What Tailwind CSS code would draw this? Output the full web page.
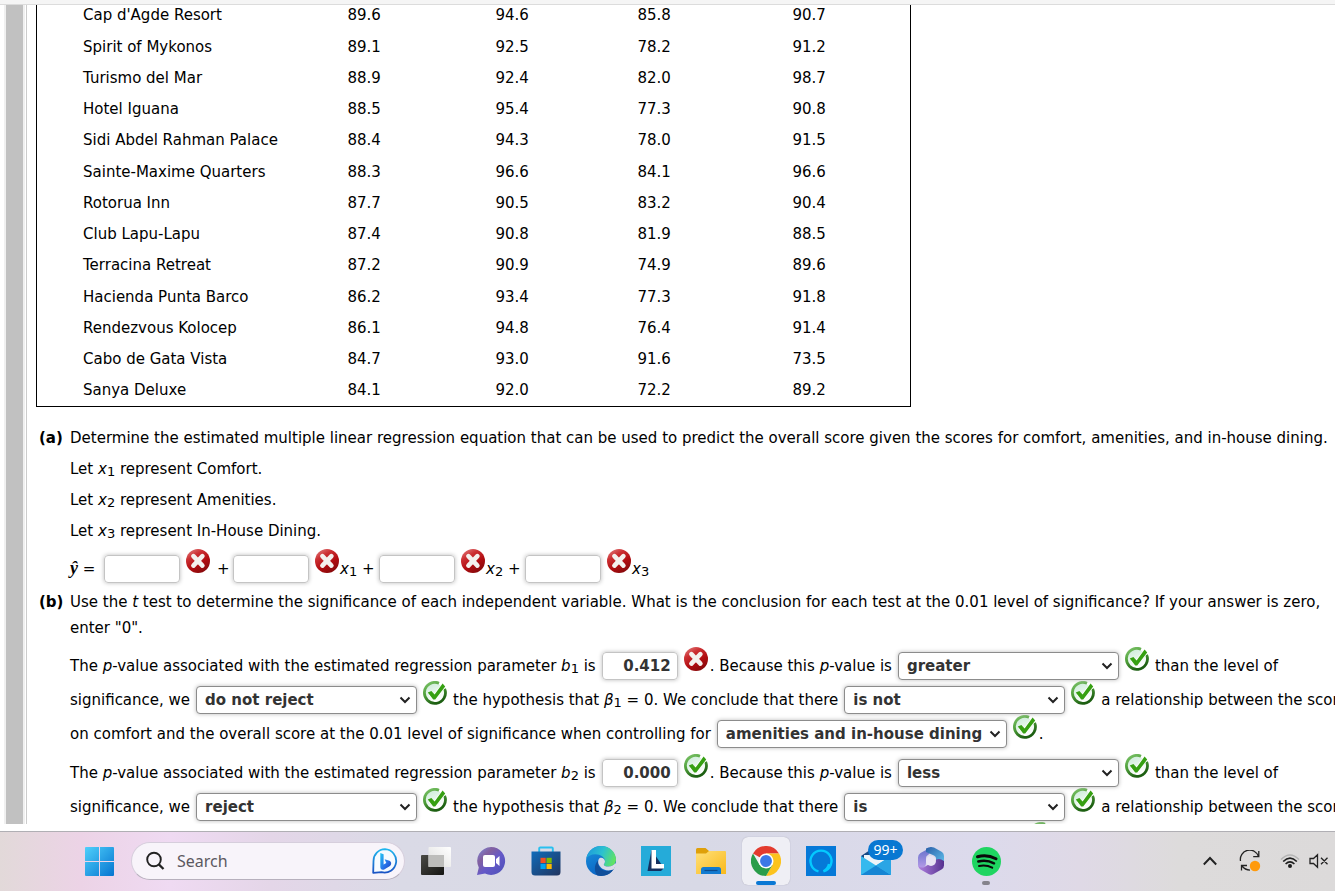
<!DOCTYPE html>
<html lang="en">
<head>
<meta charset="utf-8">
<title>Multiple regression homework</title>
<script src="https://cdn.jsdelivr.net/npm/@tailwindcss/browser@4"></script>
</head>
<body class="flex h-screen flex-col overflow-hidden bg-white font-['Verdana','DejaVu_Sans',sans-serif] text-[15px] text-black [&_sub]:-bottom-0.5 [&_sub]:text-[13px]">
<svg class="absolute h-0 w-0" aria-hidden="true">
  <defs>
    <linearGradient id="redFill" x1="0" y1="0" x2="0.6" y2="1"><stop offset="0" stop-color="#e58a8a"/><stop offset="0.35" stop-color="#cc3033"/><stop offset="0.7" stop-color="#b00c10"/><stop offset="1" stop-color="#8a0a0c"/></linearGradient>
    <linearGradient id="greenRing" x1="0" y1="0" x2="0.5" y2="1"><stop offset="0" stop-color="#7cc46a"/><stop offset="0.5" stop-color="#4f9f3a"/><stop offset="1" stop-color="#1d5f12"/></linearGradient>
    <linearGradient id="greenInner" x1="0" y1="0" x2="0.5" y2="1"><stop offset="0" stop-color="#c9ebd6"/><stop offset="1" stop-color="#ffffff"/></linearGradient>
  </defs>
  <symbol id="wrong" viewBox="0 0 24 24">
    <circle cx="12" cy="12" r="12" fill="url(#redFill)"/>
    <path d="M7.4 7.2 16.4 16.6M16.4 7.2 7.4 16.6" stroke="#f4f1ee" stroke-width="4.6" stroke-linecap="round"/>
  </symbol>
  <symbol id="right" viewBox="0 0 24 24">
    <circle cx="12" cy="12" r="9.5" fill="url(#greenInner)"/>
    <path d="M16 2.2A10.5 10.5 0 1 0 21.6 7.8" fill="none" stroke="url(#greenRing)" stroke-width="2.8"/>
    <path d="M7.5 12.6 11.4 16.6 20.8 4.2" fill="none" stroke="#fff" stroke-width="5"/>
    <path d="M4.8 11.4 8.4 10 11.6 13.6 19.6 2.6 22.2 5.6 12.2 18.6 10.2 18.4Z" fill="#36a012"/>
  </symbol>
  <symbol id="caret" viewBox="0 0 12 8"><path d="M1.5 1.5 6 6 10.5 1.5" fill="none" stroke="#222" stroke-width="2"/></symbol>
</svg>

<div class="h-[5px] shrink-0 border-b border-[#dcdcdc] bg-[#f5f5f5]"></div>
<main class="flex min-h-0 flex-1 overflow-hidden">
  <div class="ml-1 w-[21px] shrink-0 border-x-2 border-[#f0f0f0] bg-[#c1c1c1]"></div>
  <div class="ml-px w-px shrink-0 bg-[#cccccc]"></div>
  <div class="min-w-0 flex-1 overflow-hidden whitespace-nowrap pl-[9px]">
    <table class="w-[875px] border-collapse border-x border-b border-black leading-[31px] [&_td]:p-0 [&_td]:align-bottom [&_tr]:h-[31px] [&_tr:nth-child(4n+2)]:h-8">
      <colgroup><col class="w-[311px]"><col class="w-[148px]"><col class="w-[142px]"><col class="w-[155px]"><col></colgroup>
      <tbody>
        <tr class="leading-5 [&&]:h-[26px]"><td><div class="pb-1.5 pl-[46px]">Cap d'Agde Resort</div></td><td class="[&&]:pb-1.5">89.6</td><td class="[&&]:pb-1.5">94.6</td><td class="[&&]:pb-1.5">85.8</td><td class="[&&]:pb-1.5">90.7</td></tr>
        <tr><td><div class="pl-[46px]">Spirit of Mykonos</div></td><td>89.1</td><td>92.5</td><td>78.2</td><td>91.2</td></tr>
        <tr><td><div class="pl-[46px]">Turismo del Mar</div></td><td>88.9</td><td>92.4</td><td>82.0</td><td>98.7</td></tr>
        <tr><td><div class="pl-[46px]">Hotel Iguana</div></td><td>88.5</td><td>95.4</td><td>77.3</td><td>90.8</td></tr>
        <tr><td><div class="pl-[46px]">Sidi Abdel Rahman Palace</div></td><td>88.4</td><td>94.3</td><td>78.0</td><td>91.5</td></tr>
        <tr><td><div class="pl-[46px]">Sainte-Maxime Quarters</div></td><td>88.3</td><td>96.6</td><td>84.1</td><td>96.6</td></tr>
        <tr><td><div class="pl-[46px]">Rotorua Inn</div></td><td>87.7</td><td>90.5</td><td>83.2</td><td>90.4</td></tr>
        <tr><td><div class="pl-[46px]">Club Lapu-Lapu</div></td><td>87.4</td><td>90.8</td><td>81.9</td><td>88.5</td></tr>
        <tr><td><div class="pl-[46px]">Terracina Retreat</div></td><td>87.2</td><td>90.9</td><td>74.9</td><td>89.6</td></tr>
        <tr><td><div class="pl-[46px]">Hacienda Punta Barco</div></td><td>86.2</td><td>93.4</td><td>77.3</td><td>91.8</td></tr>
        <tr><td><div class="pl-[46px]">Rendezvous Kolocep</div></td><td>86.1</td><td>94.8</td><td>76.4</td><td>91.4</td></tr>
        <tr><td><div class="pl-[46px]">Cabo de Gata Vista</div></td><td>84.7</td><td>93.0</td><td>91.6</td><td>73.5</td></tr>
        <tr><td><div class="pl-[46px]">Sanya Deluxe</div></td><td>84.1</td><td>92.0</td><td>72.2</td><td>89.2</td></tr>
      </tbody>
    </table>

    <section class="mt-4 flex pl-[3px]">
      <b class="w-[31px] shrink-0 leading-[31px]">(a)</b>
      <div class="leading-[31px]">
        <p>Determine the estimated multiple linear regression equation that can be used to predict the overall score given the scores for comfort, amenities, and in-house dining.</p>
        <p class="h-[31px]">Let <i>x</i><sub>1</sub> represent Comfort.</p>
        <p class="h-[31px]">Let <i>x</i><sub>2</sub> represent Amenities.</p>
        <p class="h-[31px]">Let <i>x</i><sub>3</sub> represent In-House Dining.</p>
        <div class="flex h-[42px] items-center pt-0.5">
          <span class="w-[34px]"><b class="font-['Liberation_Serif',serif] text-lg italic leading-none">ŷ</b> =</span>
          <input aria-label="Intercept" class="h-7 w-[76px] rounded border border-[#c4c4c4] px-2 shadow-[0_0_4px_#bbb]">
          <svg class="ml-[6px] h-6 w-6 self-start"><use href="#wrong"/></svg>
          <span class="w-[23px] pl-[7px]">+</span>
          <input aria-label="Coefficient of x1" class="h-7 w-[76px] rounded border border-[#c4c4c4] px-2 shadow-[0_0_4px_#bbb]">
          <svg class="ml-[6px] h-6 w-6 self-start"><use href="#wrong"/></svg>
          <span class="w-[40px] pl-px"><i>x</i><sub>1</sub> +</span>
          <input aria-label="Coefficient of x2" class="h-7 w-[76px] rounded border border-[#c4c4c4] px-2 shadow-[0_0_4px_#bbb]">
          <svg class="ml-[6px] h-6 w-6 self-start"><use href="#wrong"/></svg>
          <span class="w-[40px] pl-px"><i>x</i><sub>2</sub> +</span>
          <input aria-label="Coefficient of x3" class="h-7 w-[76px] rounded border border-[#c4c4c4] px-2 shadow-[0_0_4px_#bbb]">
          <svg class="ml-[6px] h-6 w-6 self-start"><use href="#wrong"/></svg>
          <span class="pl-px"><i>x</i><sub>3</sub></span>
        </div>
      </div>
    </section>

    <section class="flex pl-[3px]">
      <b class="w-[31px] shrink-0 leading-[26px]">(b)</b>
      <div class="leading-[26px]">
        <p>Use the <i>t</i> test to determine the significance of each independent variable. What is the conclusion for each test at the 0.01 level of significance? If your answer is zero,<br>enter "0".</p>

        <div class="mt-2 flex h-[34px] items-center">
          <span>The <i>p</i>-value associated with the estimated regression parameter <i>b</i><sub>1</sub> is</span>
          <input aria-label="p-value for b1" value="0.412" class="ml-1.5 h-7 w-[76px] rounded border border-[#c4c4c4] pr-1.5 text-right font-bold text-[#333] shadow-[0_0_4px_#bbb]">
          <svg class="-mt-0.5 ml-[6px] h-6 w-6 self-start"><use href="#wrong"/></svg>
          <span class="ml-0.5">. Because this <i>p</i>-value is</span>
          <span class="relative ml-1.5 flex"><select aria-label="Comparison for b1" class="h-7 w-[221px] appearance-none rounded border border-[#8c8c8c] bg-white pl-2 font-bold text-[#333] shadow-[0_0_4px_#bbb]"><option>greater</option><option>less</option></select><svg class="pointer-events-none absolute right-1.5 top-2.5 h-2 w-3"><use href="#caret"/></svg></span>
          <svg class="-mt-0.5 ml-[6px] h-6 w-6 self-start"><use href="#right"/></svg>
          <span class="ml-1.5">than the level of</span>
        </div>
        <div class="flex h-[34px] items-center">
          <span>significance, we</span>
          <span class="relative ml-1.5 flex"><select aria-label="Decision for b1" class="h-7 w-[221px] appearance-none rounded border border-[#8c8c8c] bg-white pl-2 font-bold text-[#333] shadow-[0_0_4px_#bbb]"><option>do not reject</option><option>reject</option></select><svg class="pointer-events-none absolute right-1.5 top-2.5 h-2 w-3"><use href="#caret"/></svg></span>
          <svg class="-mt-0.5 ml-[6px] h-6 w-6 self-start"><use href="#right"/></svg>
          <span class="ml-1.5">the hypothesis that <i>β</i><sub>1</sub> = 0. We conclude that there</span>
          <span class="relative ml-1.5 flex"><select aria-label="Conclusion for b1" class="h-7 w-[221px] appearance-none rounded border border-[#8c8c8c] bg-white pl-2 font-bold text-[#333] shadow-[0_0_4px_#bbb]"><option>is not</option><option>is</option></select><svg class="pointer-events-none absolute right-1.5 top-2.5 h-2 w-3"><use href="#caret"/></svg></span>
          <svg class="-mt-0.5 ml-[6px] h-6 w-6 self-start"><use href="#right"/></svg>
          <span class="ml-1.5">a relationship between the scores</span>
        </div>
        <div class="flex h-[34px] items-center">
          <span>on comfort and the overall score at the 0.01 level of significance when controlling for</span>
          <span class="relative ml-1.5 flex"><select aria-label="Controlled variables for b1" class="h-7 w-[290px] appearance-none rounded border border-[#8c8c8c] bg-white pl-2 font-bold text-[#333] shadow-[0_0_4px_#bbb]"><option>amenities and in-house dining</option></select><svg class="pointer-events-none absolute right-1.5 top-2.5 h-2 w-3"><use href="#caret"/></svg></span>
          <svg class="-mt-0.5 ml-[6px] h-6 w-6 self-start"><use href="#right"/></svg>
          <span class="ml-0.5">.</span>
        </div>

        <div class="mt-[5px] flex h-[34px] items-center">
          <span>The <i>p</i>-value associated with the estimated regression parameter <i>b</i><sub>2</sub> is</span>
          <input aria-label="p-value for b2" value="0.000" class="ml-1.5 h-7 w-[76px] rounded border border-[#c4c4c4] pr-1.5 text-right font-bold text-[#333] shadow-[0_0_4px_#bbb]">
          <svg class="-mt-0.5 ml-[6px] h-6 w-6 self-start"><use href="#right"/></svg>
          <span class="ml-0.5">. Because this <i>p</i>-value is</span>
          <span class="relative ml-1.5 flex"><select aria-label="Comparison for b2" class="h-7 w-[221px] appearance-none rounded border border-[#8c8c8c] bg-white pl-2 font-bold text-[#333] shadow-[0_0_4px_#bbb]"><option>less</option><option>greater</option></select><svg class="pointer-events-none absolute right-1.5 top-2.5 h-2 w-3"><use href="#caret"/></svg></span>
          <svg class="-mt-0.5 ml-[6px] h-6 w-6 self-start"><use href="#right"/></svg>
          <span class="ml-1.5">than the level of</span>
        </div>
        <div class="flex h-[34px] items-center">
          <span>significance, we</span>
          <span class="relative ml-1.5 flex"><select aria-label="Decision for b2" class="h-7 w-[221px] appearance-none rounded border border-[#8c8c8c] bg-white pl-2 font-bold text-[#333] shadow-[0_0_4px_#bbb]"><option>reject</option><option>do not reject</option></select><svg class="pointer-events-none absolute right-1.5 top-2.5 h-2 w-3"><use href="#caret"/></svg></span>
          <svg class="-mt-0.5 ml-[6px] h-6 w-6 self-start"><use href="#right"/></svg>
          <span class="ml-1.5">the hypothesis that <i>β</i><sub>2</sub> = 0. We conclude that there</span>
          <span class="relative ml-1.5 flex"><select aria-label="Conclusion for b2" class="h-7 w-[221px] appearance-none rounded border border-[#8c8c8c] bg-white pl-2 font-bold text-[#333] shadow-[0_0_4px_#bbb]"><option>is</option><option>is not</option></select><svg class="pointer-events-none absolute right-1.5 top-2.5 h-2 w-3"><use href="#caret"/></svg></span>
          <svg class="-mt-0.5 ml-[6px] h-6 w-6 self-start"><use href="#right"/></svg>
          <span class="ml-1.5">a relationship between the scores</span>
        </div>
        <div class="flex h-[34px] pl-[959px]">
          <svg class="-mt-0.5 h-6 w-6 self-start"><use href="#right"/></svg>
        </div>
      </div>
    </section>
  </div>
</main>
<div class="h-[7px] shrink-0"></div>

<footer class="flex h-[60px] shrink-0 items-center border-t border-[#b0afb4] bg-[linear-gradient(90deg,#e2d9d9_0,#ecd3e6_80px,#efdaf2_170px,#e4d6e8_270px,#dadae6_400px,#d8d9e6_700px,#dcdaec_980px,#dfd9e6_1080px,#dddbdb_1180px,#dcdada_1335px)] pb-px pl-[75px] font-['Segoe_UI','Noto_Sans',sans-serif]">
  <button aria-label="Start" class="flex h-12 w-12 items-center justify-center">
    <svg class="h-[29px] w-[29px]" viewBox="0 0 29 29"><defs><linearGradient id="win" x1="0" y1="0" x2="1" y2="1" gradientUnits="objectBoundingBox"><stop offset="0" stop-color="#4fd0fb"/><stop offset="1" stop-color="#0574d0"/></linearGradient></defs><path fill="url(#win)" d="M1 0H14V14H0V1a1 1 0 0 1 1-1ZM15 0H28a1 1 0 0 1 1 1V14H15ZM0 15H14V29H1a1 1 0 0 1-1-1ZM15 15H29V28a1 1 0 0 1-1 1H15Z"/></svg>
  </button>
  <label class="ml-2 flex h-[38px] w-[274px] items-center rounded-full border border-[#d6cedc] border-b-[#b7b0bd] bg-[#f8f4fa] pl-[13px] pr-1.5">
    <svg class="h-5 w-5" viewBox="0 0 20 20"><circle cx="9" cy="8.500" r="6.800" fill="none" stroke="#222" stroke-width="1.900"/><path d="M13.800 13.400 18.500 18" stroke="#222" stroke-width="2.300"/></svg>
    <input aria-label="Search" placeholder="Search" class="ml-3 min-w-0 flex-1 bg-transparent text-base outline-none placeholder:text-[#5c5860]">
    <svg class="h-[26px] w-[26px]" viewBox="0 0 26 26"><defs><linearGradient id="bing" x1="0" y1="0" x2="0" y2="1"><stop offset="0" stop-color="#1fb6ee"/><stop offset="1" stop-color="#1a53c4"/></linearGradient><linearGradient id="bing2" x1="0" y1="0" x2="1" y2="1"><stop offset="0" stop-color="#25c5f2"/><stop offset="0.600" stop-color="#2870e8"/><stop offset="1" stop-color="#2047b8"/></linearGradient></defs><path d="M13 1.200A11.700 11.700 0 1 1 9.500 24.200L1.200 24.800 1.500 13A11.700 11.700 0 0 1 13 1.200Z" fill="#f6fbff" stroke="url(#bing)" stroke-width="1.800" stroke-linejoin="round"/><path d="M8.300 5 11.600 6.300V16.500L14.300 15 12.600 11.200 17.500 12.800C19.800 13.900 19.700 16.900 17.600 18.300L12.200 21.400C10 22.300 8.300 21 8.300 19Z" fill="url(#bing2)"/></svg>
  </label>
  <nav class="ml-[7px] flex gap-[7px]">
    <button aria-label="Task view" class="flex h-12 w-12 items-center justify-center">
      <svg class="h-[30px] w-[30px]" viewBox="0 0 30 30"><defs><linearGradient id="tvd" x1="0" y1="0" x2="1" y2="1"><stop offset="0" stop-color="#4a4a46"/><stop offset="1" stop-color="#151512"/></linearGradient><linearGradient id="tvl" x1="1" y1="0" x2="0" y2="1"><stop offset="0" stop-color="#fff"/><stop offset="1" stop-color="#dededd"/></linearGradient></defs><rect y="9" width="23" height="20" rx="1" fill="url(#tvd)"/><rect x="7.500" y="1" width="22.500" height="20" rx="1" fill="url(#tvl)"/><path d="M7.500 9H23V21H7.500Z" fill="#bdbdbb"/></svg>
    </button>
    <button aria-label="Chat" class="flex h-12 w-12 items-center justify-center">
      <svg class="h-[30px] w-[30px]" viewBox="0 0 30 30"><defs><linearGradient id="chat" x1="0" y1="0" x2="1" y2="1"><stop offset="0" stop-color="#7a8be0"/><stop offset="0.300" stop-color="#83609f"/><stop offset="0.550" stop-color="#6559c8"/><stop offset="1" stop-color="#4c50b8"/></linearGradient></defs><path d="M15 1A14 14 0 1 1 9 27.600L1 29 2.800 21.500A14 14 0 0 1 15 1Z" fill="url(#chat)"/><rect x="7" y="9" width="12" height="12" rx="2" fill="#fff"/><path d="M20 13 23.500 10V20L20 17Z" fill="#fff"/></svg>
    </button>
    <button aria-label="Microsoft Store" class="flex h-12 w-12 items-center justify-center">
      <svg class="h-[30px] w-[30px]" viewBox="0 0 30 30"><defs><linearGradient id="store" x1="0" y1="0" x2="1" y2="1"><stop offset="0" stop-color="#0f6cba"/><stop offset="1" stop-color="#22355f"/></linearGradient></defs><path d="M8.200 7V2.500a1 1 0 0 1 1-1H20.800a1 1 0 0 1 1 1V7" fill="none" stroke="#29c0ef" stroke-width="1.900"/><path d="M.500 5.500H29.500V26a3.500 3.500 0 0 1-3.500 3.500H4A3.500 3.500 0 0 1 .500 26Z" fill="url(#store)"/><path fill="#f25022" d="M9.500 11.800h5.200V17H9.500z"/><path fill="#7fba00" d="M15.500 11.800h5.200V17h-5.200z"/><path fill="#00a4ef" d="M9.500 17.800h5.200V23H9.500z"/><path fill="#ffb900" d="M15.500 17.800h5.200V23h-5.200z"/></svg>
    </button>
    <button aria-label="Edge" class="flex h-12 w-12 items-center justify-center">
      <svg class="h-[30px] w-[30px]" viewBox="0 0 30 30"><defs><linearGradient id="edgeTop" x1="0" y1="0.300" x2="1" y2="0.600"><stop offset="0" stop-color="#1d9bdb"/><stop offset="0.500" stop-color="#2cc1d0"/><stop offset="1" stop-color="#63e45f"/></linearGradient><linearGradient id="edgeMid" x1="0" y1="0" x2="0.500" y2="1"><stop offset="0" stop-color="#1993db"/><stop offset="1" stop-color="#0a62c4"/></linearGradient></defs><circle cx="15" cy="15" r="15" fill="url(#edgeMid)"/><path d="M.300 12.500C1.800 5 7.800 0 15 0 23.500 0 30 6 30 13.500 30 18 26.500 20.500 22.500 20.500 19.500 20.500 17.800 19.700 17.800 18.700 17.800 18 19 17.300 19 15.200 19 11.500 14.500 8.200 9.500 8.200 5 8.200 2 10 .300 12.500Z" fill="url(#edgeTop)"/><path d="M11.500 29.600C8 26 7.800 18.500 12.200 14.500 11 20 15.500 25 20.500 25 23.500 25 26 24.200 27.800 23 24.500 28.500 18 31 11.500 29.600Z" fill="#104f9b"/><path d="M19 15.200C19 17.300 17.800 18 17.800 18.700 17.800 19.700 19.500 20.500 22.500 20.500 25.500 20.500 28 19.200 29.100 17.300L31 18 27.800 23C25 24.800 21 25 17.500 23.200 13.800 21.300 11 17 12.700 13.300 14.500 10.500 18.500 12 19 15.200Z" fill="#dbdbe8"/></svg>
    </button>
    <button aria-label="L app" class="flex h-12 w-12 items-center justify-center">
      <svg class="h-[30px] w-[30px]" viewBox="0 0 30 30"><path fill="#25abd9" d="M0 0h30v30H0z"/><path d="M10.500 4 6.500 25H20L23 22Z" fill="#14305f"/><path d="M10.500 4H15V18H23V22.500H10.500Z" fill="#fff"/></svg>
    </button>
    <button aria-label="File Explorer" class="flex h-12 w-12 items-center justify-center">
      <svg class="h-[30px] w-[30px]" viewBox="0 0 30 30"><defs><linearGradient id="folder" x1="0" y1="0" x2="1" y2="1"><stop offset="0" stop-color="#ffe07a"/><stop offset="1" stop-color="#f9b91a"/></linearGradient></defs><path d="M0 3.500A1.500 1.500 0 0 1 1.500 2H9.500L13 5V9H0Z" fill="#dfa00a"/><path d="M0 7.500H10L13 5H29a1 1 0 0 1 1 1V28H0Z" fill="url(#folder)"/><path d="M5 28V23.500A2.500 2.500 0 0 1 7.500 21H22.500A2.500 2.500 0 0 1 25 23.500V28Z" fill="#127bd0"/><path d="M8.500 24.500h13" stroke="#0b4b8c" stroke-width="1.200"/></svg>
    </button>
    <button aria-label="Chrome" class="relative flex h-12 w-12 items-center justify-center rounded-md bg-[#efeff5] shadow-[0_0_1px_#9999a8]">
      <svg class="h-[30px] w-[30px]" viewBox="0 0 48 48"><path d="M24 24 3.200 12A24 24 0 0 1 44.800 12H24Z" fill="#e33b2e"/><path d="M24 12H44.800A24 24 0 0 1 24 48L34.400 30Z" fill="#fcc31e"/><path d="M3.200 12A24 24 0 0 0 24 48L34.400 30 24 34 13.600 30Z" fill="#2a9d4a"/><circle cx="24" cy="24" r="12" fill="#fff"/><circle cx="24" cy="24" r="9.500" fill="#3b78e7"/></svg>
      <span class="absolute bottom-0 left-3.5 h-1 w-5 rounded-full bg-[#0a78d4]"></span>
    </button>
    <button aria-label="Alexa" class="flex h-12 w-12 items-center justify-center">
      <svg class="h-[30px] w-[30px]" viewBox="0 0 30 30"><path fill="#0579d8" d="M0 0h30v30H0z"/><path d="M12.500 25.300A10.500 10.500 0 1 1 17.500 25.300Q22 22.500 23 18" fill="none" stroke="#04caff" stroke-width="2.400"/></svg>
    </button>
    <button aria-label="Mail, 99+ unread" class="relative flex h-12 w-12 items-center justify-center">
      <svg class="h-[30px] w-[30px]" viewBox="0 0 30 30"><path d="M0 10 15 0 30 10V16H0Z" fill="#174a86"/><path d="M3 9H27V20H3Z" fill="#eef3f8"/><path d="M0 10 15 19.500 30 10V29H0Z" fill="#35b9ee"/><path d="M0 29 15 19.500 30 29Z" fill="#1685d3"/><path d="M30 10V29L15 19.500Z" fill="#2aa5e5"/></svg>
      <span class="absolute left-4 top-[3px] flex h-5 w-[35px] items-center justify-center rounded-full bg-[#0878d2] text-sm text-white">99+</span>
    </button>
    <button aria-label="Microsoft 365" class="flex h-12 w-12 items-center justify-center">
      <svg class="h-[30px] w-[30px]" viewBox="0 0 30 30"><defs><linearGradient id="mA" x1="0" y1="0" x2="0" y2="1"><stop offset="0" stop-color="#5f6fc8"/><stop offset="1" stop-color="#b59ae8"/></linearGradient><linearGradient id="mB" x1="0" y1="0" x2="1" y2="1"><stop offset="0" stop-color="#2b5fa8"/><stop offset="1" stop-color="#62c4f0"/></linearGradient><linearGradient id="mC" x1="0" y1="0" x2="1" y2="0"><stop offset="0" stop-color="#ae80df"/><stop offset="1" stop-color="#56318f"/></linearGradient></defs><path d="M15.500 1 4.500 7Q2 8.500 2 11.500V19Q2 22 5 22 10 22 10 17V12Q10 10 12 9Q15 7 15.500 1Z" fill="url(#mA)"/><path d="M10 2.500Q14 0 18 1.500L26 6Q28 7.500 28 10V19L20 15V12Q20 10.500 18 9.500L10 6Z" fill="url(#mB)"/><path d="M28 15V19.500Q28 22 25.500 23.500L17.500 28Q15 29.300 12.500 28L4.500 23.500Q2.500 22 2.500 20 6 23 10 20L18 15.500Q22 11 28 15Z" fill="url(#mC)"/><circle cx="15" cy="15" r="5" fill="#e8e3f4"/></svg>
    </button>
    <button aria-label="Spotify" class="relative flex h-12 w-12 items-center justify-center">
      <svg class="h-[29px] w-[29px]" viewBox="0 0 29 29"><circle cx="14.500" cy="14.500" r="14.500" fill="#1fd561"/><g fill="none" stroke="#0a0a0a" stroke-linecap="round"><path d="M5.500 9.800Q15 7 24 11.800" stroke-width="3"/><path d="M6.300 14.500Q14.500 12.200 22 16.300" stroke-width="2.500"/><path d="M7 19Q14 17.300 20.200 20.700" stroke-width="2"/></g></svg>
      <span class="absolute bottom-0 left-5 h-1 w-2 rounded-full bg-[#85838c]"></span>
    </button>
  </nav>
  <div class="ml-auto flex items-center pr-[6px]">
    <button aria-label="Show hidden icons"><svg class="h-4 w-4" viewBox="0 0 16 16"><path d="M1.800 11.500 8 5 14.200 11.500" fill="none" stroke="#222" stroke-width="1.900"/></svg></button>
    <button aria-label="Updates" class="ml-[21px]"><svg class="h-[22px] w-[22px]" viewBox="0 0 22 22"><g fill="none" stroke="#222" stroke-width="1.300"><path d="M1.500 11A9.300 9.300 0 0 1 19.500 6.500M19.800 1V6.700H14.200"/><path d="M2.500 20.500V15.500H8M3 16Q6 20 11 20.200"/></g><circle cx="16" cy="16" r="5.200" fill="#ff9a0c"/></svg></button>
    <button aria-label="Wi-Fi" class="ml-[19px]"><svg class="h-5 w-5" viewBox="0 0 20 20"><g fill="none"><path d="M1 8.500Q10-.5 19 8.500" stroke="#b4b4b4" stroke-width="1.500"/><path d="M3.200 10.500Q10 3.800 16.800 10.500M5.600 13Q10 8.600 14.400 13" stroke="#1d1d1d" stroke-width="1.600"/></g><circle cx="10" cy="15" r="2" fill="#1d1d1d"/></svg></button>
    <button aria-label="Muted" class="ml-[9px]"><svg class="h-5 w-5" viewBox="0 0 20 20"><path d="M1 7.500H4.500L8.500 3.800V16.200L4.500 12.500H1ZM12 6.800 18.500 13.200M18.500 6.800 12 13.200" fill="none" stroke="#222" stroke-width="1.300"/></svg></button>
  </div>
</footer>
</body>
</html>
